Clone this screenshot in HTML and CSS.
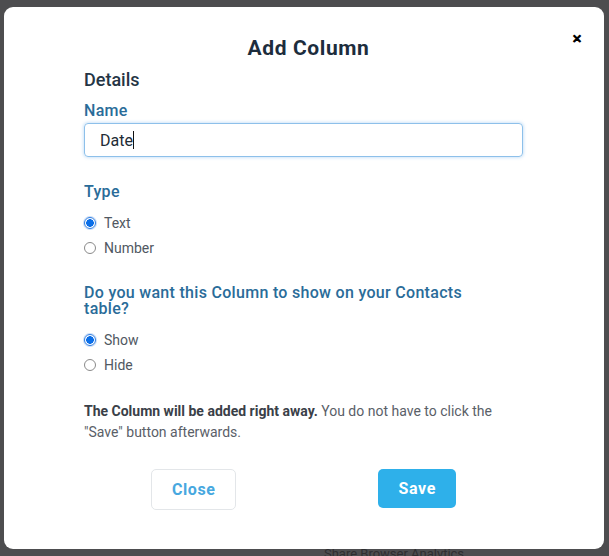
FILE: index.html
```html
<!DOCTYPE html>
<html>
<head>
<meta charset="utf-8">
<link rel="stylesheet" href="styles.css">
</head>
<body>
<div class="backdrop">
  <div class="modal">
    <button class="close-x" aria-label="Close">&#x2715;</button>
    <h1 class="title">Add Column</h1>
    <div class="content">
      <h2 class="section">Details</h2>
      <label class="field-label">Name</label>
      <div class="input"><span>Date</span><span class="caret"></span></div>

      <div class="group-label">Type</div>
      <div class="radio-row"><span class="radio checked"></span><span class="radio-text">Text</span></div>
      <div class="radio-row"><span class="radio"></span><span class="radio-text">Number</span></div>

      <div class="group-label question">Do you want this Column to show on your Contacts table?</div>
      <div class="radio-row"><span class="radio checked"></span><span class="radio-text">Show</span></div>
      <div class="radio-row"><span class="radio"></span><span class="radio-text">Hide</span></div>

      <p class="note"><strong>The Column will be added right away.</strong> You do not have to click the "Save" button afterwards.</p>

      <div class="actions">
        <button class="btn btn-close">Close</button>
        <button class="btn btn-save">Save</button>
      </div>
    </div>
  </div>
  <div class="behind">Share Browser Analytics</div>
</div>
</body>
</html>
```
FILE: styles.css
```css
html, body {
  margin: 0;
  padding: 0;
  height: 100%;
}
body {
  background: #4d4d4f;
  font-family: Roboto, "Liberation Sans", sans-serif;
  overflow: hidden;
}
.backdrop {
  padding: 7px 5px 0 4px;
}
.modal {
  position: relative;
  background: #ffffff;
  border-radius: 9px;
  height: 542px;
  box-sizing: border-box;
  padding-top: 34px;
}
.close-x {
  position: absolute;
  top: 25px;
  right: 22px;
  border: none;
  background: none;
  padding: 0;
  font-size: 12px;
  font-weight: 900;
  color: #000;
  font-family: "DejaVu Sans", sans-serif;
  line-height: 14px;
  -webkit-text-stroke: 1px #000;
}
.title {
  margin: 0;
  text-align: center;
  font-size: 21px;
  font-weight: 700;
  letter-spacing: 0.6px;
  color: #1d2d3d;
  line-height: 14px;
  padding: 0 0 0 9px;
}
.content {
  margin-left: 80px;
  width: 439px;
  padding-top: 13px;
}
.section {
  margin: 0;
  font-size: 18px;
  font-weight: 500;
  color: #253545;
  line-height: 24px;
}
.field-label {
  display: block;
  margin-top: 11px;
  font-size: 16px;
  font-weight: 500;
  color: #2a6c99;
  line-height: 16px;
  letter-spacing: 0.3px;
}
.input {
  margin-top: 4px;
  height: 34px;
  box-sizing: border-box;
  border: 1px solid #8dc0ea;
  border-radius: 4px;
  box-shadow: 0 0 3px 1px rgba(120, 180, 235, 0.35);
  display: flex;
  align-items: center;
  padding-left: 15px;
  font-size: 16px;
  color: #222c36;
}
.caret {
  display: inline-block;
  width: 1px;
  height: 18px;
  background: #111;
}
.group-label {
  margin-top: 27px;
  font-size: 16px;
  font-weight: 500;
  color: #2a6c99;
  line-height: 16px;
  letter-spacing: 0.3px;
}
.question {
  margin-top: 25px;
  max-width: 410px;
}
.radio-row {
  display: flex;
  align-items: center;
  height: 25px;
}
.group-label + .radio-row {
  margin-top: 10px;
}
.radio {
  width: 12px;
  height: 12px;
  border-radius: 50%;
  border: 1px solid #8a8a8a;
  box-sizing: border-box;
  margin-right: 8px;
}
.radio.checked {
  border: 1px solid #2f7de1;
  background: radial-gradient(circle, #0a6ee8 0 3.6px, #fff 4px);
  box-shadow: 0 0 0 1px rgba(47, 125, 225, 0.25);
}
.radio-text {
  font-size: 14px;
  color: #505862;
}
.note {
  margin: 24px 0 0;
  font-size: 14px;
  line-height: 21px;
  color: #5a6068;
}
.note strong {
  color: #3a4048;
  font-weight: 700;
}
.actions {
  margin-top: 26px;
  display: grid;
  grid-template-columns: 1fr 1fr;
  align-items: start;
  justify-items: center;
}
.btn {
  font-family: Roboto, "Liberation Sans", sans-serif;
  font-size: 16px;
  font-weight: 700;
  letter-spacing: 0.6px;
  border-radius: 5px;
  cursor: pointer;
}
.btn-close {
  width: 85px;
  height: 41px;
  background: #fff;
  border: 1px solid #e3e6e9;
  color: #47a8df;
}
.btn-save {
  width: 78px;
  height: 39px;
  background: #2eb0ea;
  border: none;
  color: #fff;
  margin-left: 8px;
}
.behind {
  text-align: center;
  padding-left: 180px;
  margin-top: -3px;
  font-size: 13px;
  color: #2f2f31;
}
```
